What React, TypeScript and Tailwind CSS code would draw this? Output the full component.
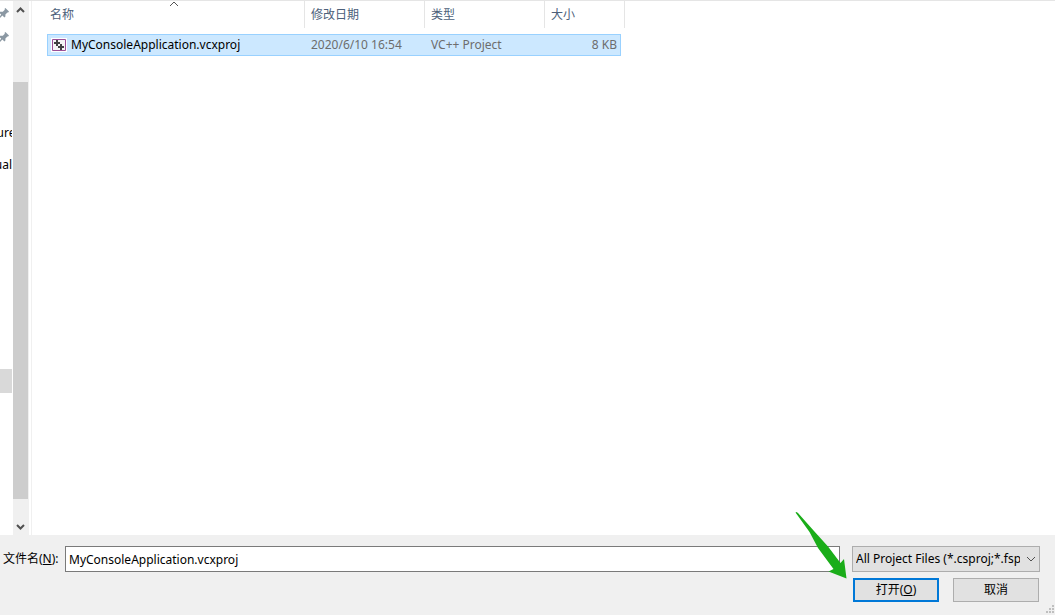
import { useState } from 'react';

type FileRow = {
    name: string;
    modified: string;
    type: string;
    size: string;
};

const files: FileRow[] = [
    {
        name: 'MyConsoleApplication.vcxproj',
        modified: '2020/6/10 16:54',
        type: 'VC++ Project',
        size: '8 KB',
    },
];

function PinIcon() {
    return (
        <svg width="9" height="12" viewBox="0 0 9 12" fill="#8b98a3" aria-hidden="true">
            <path d="M5.4 1 9 4.6 8.2 5.6 7.4 5.4 5.4 7.4 5.4 9.6 4.4 10.6 2.4 8.6 0 11V9.2L1.2 7.6 0 6.4V4.8L2.8 4.8 4.8 2.8 4.6 1.8Z" />
        </svg>
    );
}

function ProjectIcon() {
    return (
        <svg width="16" height="14" viewBox="0 0 16 14" aria-hidden="true">
            <path fill="#fff" d="M0 0h16v14H0z" />
            <path fill="#f5f5f5" stroke="#9b4f96" d="M1.5 1.5h13v11h-13z" />
            <path fill="#424242" d="M5 2h2v2h2v2H7v2H5V6H3V4h2zM9 6h2v2h2v2h-2v2H9v-2H7V8h2z" />
        </svg>
    );
}

function Chevron({ className, points }: { className: string; points: string }) {
    return (
        <svg width="10" height="6" viewBox="0 0 10 6" fill="none" stroke="currentColor" className={className} aria-hidden="true">
            <polyline points={points} />
        </svg>
    );
}

function Sidebar() {
    return (
        <div className="flex shrink-0 border-r border-[#f0f0f0] pr-[2px]">
            <nav className="flex w-3 flex-col items-center overflow-hidden">
                <div className="flex w-full flex-col gap-3 pt-[6px]">
                    <PinIcon />
                    <PinIcon />
                </div>
                <a href="#azure" className="mt-[82px] leading-4">ure</a>
                <a href="#visual" className="mt-4 self-end leading-4">ual</a>
                <div className="mt-[196px] h-6 w-full bg-[#d9d9d9]" />
            </nav>
            <div className="ml-px flex w-4 flex-col items-center bg-[#f0f0f0] text-[#505050]">
                <button className="flex h-[17px] w-full items-center justify-center" aria-label="Scroll up">
                    <Chevron className="stroke-2" points="1,5 4.5,1.5 8,5" />
                </button>
                <div className="mt-16 mr-px w-[15px] flex-1 bg-[#cdcdcd]" />
                <button className="mt-[19px] flex h-[17px] w-full items-center justify-center" aria-label="Scroll down">
                    <Chevron className="stroke-2" points="1,1 4.5,4.5 8,1" />
                </button>
            </div>
        </div>
    );
}

function FileTable() {
    const head = 'h-[27px] border-r border-[#e5e5e5] px-[6px] text-left font-normal text-[#4c607a]';
    const cell = 'flex h-[22px] items-center border-y border-[#99d1ff] bg-[#cce8ff]';

    return (
        <table className="ml-[15px] w-[578px] table-fixed border-separate border-spacing-0 self-start">
            <thead>
                <tr>
                    <th className={`${head} relative w-[258px] pl-[3px]`}>
                        名称
                        <Chevron className="absolute top-0 right-[3px] left-0 mx-auto text-[#555]" points="1,5 5,1 9,5" />
                    </th>
                    <th className={`${head} w-[120px]`}>修改日期</th>
                    <th className={`${head} w-[120px]`}>类型</th>
                    <th className={`${head} w-20`}>大小</th>
                </tr>
            </thead>
            <tbody>
                {files.map(file => (
                    <tr key={file.name} className="text-[#6d6d6d]">
                        <td className="p-0 pt-[6px]">
                            <div className={`${cell} gap-1 border-l pl-[3px] text-black`}>
                                <ProjectIcon />
                                {file.name}
                            </div>
                        </td>
                        <td className="p-0 pt-[6px]">
                            <div className={`${cell} pl-[6px]`}>{file.modified}</div>
                        </td>
                        <td className="p-0 pt-[6px]">
                            <div className={`${cell} pl-[6px]`}>{file.type}</div>
                        </td>
                        <td className="p-0 pt-[6px] pr-1">
                            <div className={`${cell} justify-end border-r pr-[3px]`}>{file.size}</div>
                        </td>
                    </tr>
                ))}
            </tbody>
        </table>
    );
}

function Footer() {
    const [fileName, setFileName] = useState(files[0].name);

    return (
        <footer className="relative flex h-20 shrink-0 items-start gap-3 bg-[#f0f0f0] pt-[11px] pr-[15px] pl-[3px]">
            <div className="flex flex-1 items-center">
                <label htmlFor="file-name" className="w-[62px]">
                    文件名(<u>N</u>):
                </label>
                <input
                    id="file-name"
                    className="h-[26px] flex-1 border border-[#7a7a7a] bg-white px-[3px]"
                    value={fileName}
                    onChange={e => setFileName(e.target.value)}
                />
            </div>
            <div className="flex w-[188px] flex-col gap-[6px]">
                <div className="relative">
                    <select aria-label="File type" className="block h-[26px] w-full appearance-none border border-[#adadad] bg-[#e1e1e1] pr-[19px] pl-[3px]">
                        <option>All Project Files (*.csproj;*.fsproj;*.vcxproj)</option>
                    </select>
                    <Chevron className="pointer-events-none absolute top-[10px] right-1 text-[#505050]" points="1,1 5,5 9,1" />
                </div>
                <div className="grid grid-cols-2 gap-[14px] pr-px pl-px">
                    <button className="h-6 border-2 border-[#0078d7] bg-[#e1e1e1] leading-4">
                        打开(<u>O</u>)
                    </button>
                    <button className="h-6 border border-[#adadad] bg-[#e1e1e1] leading-4">取消</button>
                </div>
            </div>
            <svg className="absolute right-0 bottom-0 text-[#bfbfbf]" width="10" height="11" viewBox="0 0 10 11" fill="currentColor" aria-hidden="true">
                <path d="M7 1h2v2H7zM4 4h2v2H4zM7 4h2v2H7zM1 7h2v2H1zM4 7h2v2H4zM7 7h2v2H7z" />
            </svg>
            <svg className="pointer-events-none absolute right-[207px] bottom-[35px]" width="54" height="70" viewBox="0 0 54 70" aria-hidden="true">
                <path fill="#1aad19" d="M1.5 2.5 2.5 2 4 3 20 21 34 36.5 46.5 53 50 49 52.5 68.5 34.5 61.5 39.5 59 24 38 15.5 22Z" />
            </svg>
        </footer>
    );
}

export default function App() {
    return (
        <div className="flex h-screen flex-col overflow-hidden bg-white font-['Noto_Sans','Noto_Sans_CJK_SC',sans-serif] text-[12px] leading-4 text-black">
            <main className="flex min-h-0 flex-1 border-t border-[#e5e5e5]">
                <Sidebar />
                <FileTable />
            </main>
            <Footer />
        </div>
    );
}
